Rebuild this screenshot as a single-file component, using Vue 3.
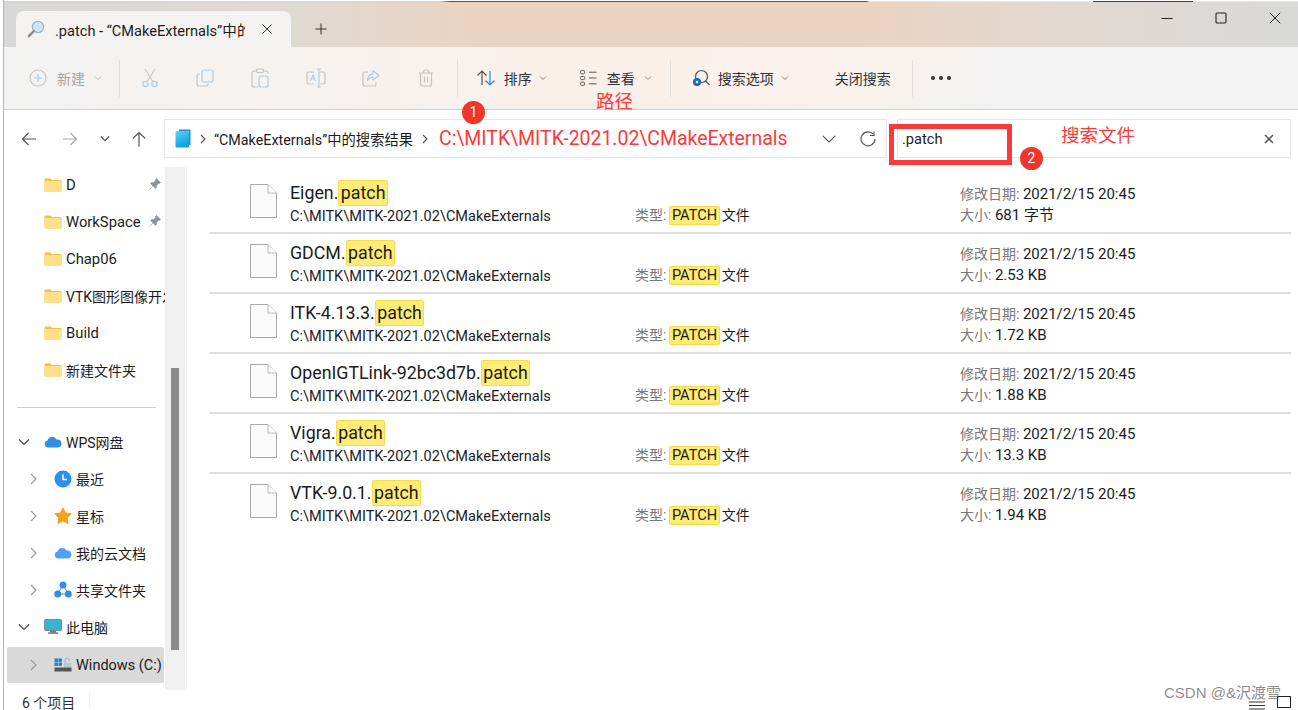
<template>
  <div class="window">
    <div class="top-strip"></div>

    <!-- title bar -->
    <div class="titlebar">
      <div class="tab">
        <svg class="tab-icon" width="18" height="18" viewBox="0 0 18 18">
          <circle cx="11" cy="7" r="5.6" fill="#cfe6f5" stroke="#9db4c4" stroke-width="1.2" />
          <path d="M7 11 L1.8 16.2" stroke="#8a8a8a" stroke-width="2.4" stroke-linecap="round" />
        </svg>
        <span class="tab-title">.patch - “CMakeExternals”中的搜索结果</span>
        <svg class="tab-close" width="12" height="12" viewBox="0 0 12 12">
          <path d="M1.5 1.5 L10.5 10.5 M10.5 1.5 L1.5 10.5" stroke="#333" stroke-width="1" fill="none" />
        </svg>
      </div>
      <svg class="tab-plus" width="12" height="12" viewBox="0 0 12 12">
        <path d="M6 0.5 V11.5 M0.5 6 H11.5" stroke="#333" stroke-width="1" fill="none" />
      </svg>
      <div class="win-controls">
        <svg width="12" height="12" viewBox="0 0 12 12"><path d="M0.5 6.5 H11.5" stroke="#222" stroke-width="1" /></svg>
        <svg width="12" height="12" viewBox="0 0 12 12"><rect x="1" y="1" width="10" height="10" rx="1.2" fill="none" stroke="#222" stroke-width="1.1" /></svg>
        <svg width="12" height="12" viewBox="0 0 12 12"><path d="M0.8 0.8 L11.2 11.2 M11.2 0.8 L0.8 11.2" stroke="#222" stroke-width="1" /></svg>
      </div>
    </div>

    <!-- command bar -->
    <div class="toolbar">
      <div class="tool new-btn disabled">
        <svg width="18" height="18" viewBox="0 0 18 18">
          <circle cx="9" cy="9" r="8" fill="none" stroke="#c4c4c4" stroke-width="1.2" />
          <path d="M9 5 V13 M5 9 H13" stroke="#a9cce8" stroke-width="1.2" />
        </svg>
        <span>新建</span>
        <svg class="caret" width="8" height="8" viewBox="0 0 8 8"><path d="M1 2.5 L4 5.5 L7 2.5" fill="none" stroke="#bbb" /></svg>
      </div>
      <div class="sep sep-a"></div>
      <div class="icon-btn">
        <svg width="18" height="20" viewBox="0 0 18 20">
          <path d="M4 1 L11.5 13 M14 1 L6.5 13" stroke="#c4c4c4" stroke-width="1.1" fill="none" />
          <circle cx="4.5" cy="16" r="2.7" fill="none" stroke="#a9cce8" stroke-width="1.2" />
          <circle cx="13.5" cy="16" r="2.7" fill="none" stroke="#a9cce8" stroke-width="1.2" />
        </svg>
      </div>
      <div class="icon-btn">
        <svg width="18" height="18" viewBox="0 0 18 18">
          <path d="M4 5 H3 A2 2 0 0 0 1 7 V15 A2 2 0 0 0 3 17 H10 A2 2 0 0 0 12 15 V14" fill="none" stroke="#c4c4c4" stroke-width="1.2" />
          <rect x="6" y="1" width="11" height="12" rx="2" fill="none" stroke="#a9cce8" stroke-width="1.2" />
        </svg>
      </div>
      <div class="icon-btn">
        <svg width="18" height="20" viewBox="0 0 18 20">
          <path d="M5 3 H3 A2 2 0 0 0 1 5 V17 A2 2 0 0 0 3 19 H7 M13 3 H15 A2 2 0 0 1 17 5 V6" fill="none" stroke="#c4c4c4" stroke-width="1.2" />
          <rect x="5.5" y="1" width="7" height="3.5" rx="1" fill="none" stroke="#c4c4c4" stroke-width="1.2" />
          <rect x="8" y="8" width="9" height="11" rx="2" fill="none" stroke="#a9cce8" stroke-width="1.2" />
        </svg>
      </div>
      <div class="icon-btn">
        <svg width="20" height="20" viewBox="0 0 20 20">
          <path d="M8 4 H3 A2 2 0 0 0 1 6 V14 A2 2 0 0 0 3 16 H8 M14 4 H17 A2 2 0 0 1 19 6 V14 A2 2 0 0 1 17 16 H14" fill="none" stroke="#c4c4c4" stroke-width="1.2" />
          <path d="M4.5 13 L7 7 L9.5 13 M5.5 11 H8.5 M11 1 H15 M11 19 H15 M13 1 V19" fill="none" stroke="#a9cce8" stroke-width="1.1" />
        </svg>
      </div>
      <div class="icon-btn">
        <svg width="18" height="18" viewBox="0 0 18 18">
          <path d="M6 3 H3 A2 2 0 0 0 1 5 V15 A2 2 0 0 0 3 17 H12 A2 2 0 0 0 14 15 V13" fill="none" stroke="#c4c4c4" stroke-width="1.2" />
          <path d="M11 1.5 L17 6.5 L11 11 V8.2 C8 8.2 6.5 9.5 5.5 11.5 C5.5 7.5 8 5 11 4.8 Z" fill="none" stroke="#a9cce8" stroke-width="1.2" stroke-linejoin="round" />
        </svg>
      </div>
      <div class="icon-btn">
        <svg width="16" height="18" viewBox="0 0 16 18">
          <path d="M1 4 H15 M5.5 4 V2.4 A1.4 1.4 0 0 1 6.9 1 H9.1 A1.4 1.4 0 0 1 10.5 2.4 V4 M2.5 4 V15 A2 2 0 0 0 4.5 17 H11.5 A2 2 0 0 0 13.5 15 V4 M6.5 7.5 V13.5 M9.5 7.5 V13.5" fill="none" stroke="#c4c4c4" stroke-width="1.2" />
        </svg>
      </div>
      <div class="sep sep-b"></div>
      <div class="tool sort-btn">
        <svg width="20" height="18" viewBox="0 0 20 18">
          <path d="M6 16 V2 M1.5 6.5 L6 2 L10.5 6.5" fill="none" stroke="#555" stroke-width="1.2" />
          <path d="M14 2 V16 M9.5 11.5 L14 16 L18.5 11.5" fill="none" stroke="#2f86d6" stroke-width="1.2" />
        </svg>
        <span>排序</span>
        <svg class="caret" width="8" height="8" viewBox="0 0 8 8"><path d="M1 2.5 L4 5.5 L7 2.5" fill="none" stroke="#888" /></svg>
      </div>
      <div class="tool view-btn">
        <svg width="17" height="16" viewBox="0 0 17 16">
          <rect x="0.6" y="0.6" width="4" height="3.2" rx="1" fill="none" stroke="#555" />
          <rect x="0.6" y="6.4" width="4" height="3.2" rx="1" fill="none" stroke="#555" />
          <rect x="0.6" y="12.2" width="4" height="3.2" rx="1" fill="none" stroke="#555" />
          <path d="M9 2.2 H16.5 M9 8 H16.5 M9 13.8 H16.5" stroke="#555" stroke-width="1" />
        </svg>
        <span>查看</span>
        <svg class="caret" width="8" height="8" viewBox="0 0 8 8"><path d="M1 2.5 L4 5.5 L7 2.5" fill="none" stroke="#888" /></svg>
      </div>
      <div class="sep sep-c"></div>
      <div class="tool options-btn">
        <svg width="18" height="18" viewBox="0 0 18 18">
          <circle cx="9.5" cy="7.5" r="6" fill="none" stroke="#555" stroke-width="1.2" />
          <path d="M14 12 L17.5 16" stroke="#555" stroke-width="1.2" />
          <circle cx="5" cy="13" r="4" fill="#1668b8" />
          <circle cx="5" cy="13" r="1.3" fill="#fff" />
        </svg>
        <span>搜索选项</span>
        <svg class="caret" width="8" height="8" viewBox="0 0 8 8"><path d="M1 2.5 L4 5.5 L7 2.5" fill="none" stroke="#888" /></svg>
      </div>
      <div class="tool close-search"><span>关闭搜索</span></div>
      <div class="sep sep-d"></div>
      <div class="more"><i></i><i></i><i></i></div>
    </div>

    <!-- address row -->
    <div class="addressrow">
      <div class="nav">
        <svg width="16" height="14" viewBox="0 0 16 14"><path d="M15 7 H1.5 M7.5 1 L1.5 7 L7.5 13" fill="none" stroke="#555" stroke-width="1.2" /></svg>
        <svg class="nav-forward" width="16" height="14" viewBox="0 0 16 14"><path d="M1 7 H14.5 M8.5 1 L14.5 7 L8.5 13" fill="none" stroke="#a8a8a8" stroke-width="1.2" /></svg>
        <svg width="10" height="14" viewBox="0 0 10 14"><path d="M0.8 4.5 L5 8.7 L9.2 4.5" fill="none" stroke="#555" stroke-width="1.2" /></svg>
        <svg width="14" height="16" viewBox="0 0 14 16"><path d="M7 15.5 V1.5 M0.8 7.5 L7 1.5 L13.2 7.5" fill="none" stroke="#555" stroke-width="1.2" /></svg>
      </div>
      <div class="addressbox">
        <svg class="addr-icon" width="16" height="19" viewBox="0 0 16 19">
          <defs>
            <linearGradient id="addrGrad" x1="0" y1="0" x2="0.4" y2="1">
              <stop offset="0" stop-color="#5fd3f5" />
              <stop offset="1" stop-color="#0f9fe6" />
            </linearGradient>
          </defs>
          <path d="M4 0.5 H15.5 V16 H14 V2 H4 Z" fill="#1f8fd0" />
          <rect x="0.5" y="2" width="13.5" height="16.5" rx="1" fill="url(#addrGrad)" />
        </svg>
        <svg class="crumb" width="6" height="10" viewBox="0 0 6 10"><path d="M1 1 L5 5 L1 9" fill="none" stroke="#555" stroke-width="1.2" /></svg>
        <span class="crumb-text">“CMakeExternals”中的搜索结果</span>
        <svg class="crumb crumb-b" width="6" height="10" viewBox="0 0 6 10"><path d="M1 1 L5 5 L1 9" fill="none" stroke="#555" stroke-width="1.2" /></svg>
        <span class="path-red">C:\MITK\MITK-2021.02\CMakeExternals</span>
        <svg class="addr-down" width="14" height="8" viewBox="0 0 14 8"><path d="M0.8 0.8 L7 7 L13.2 0.8" fill="none" stroke="#555" stroke-width="1.1" /></svg>
        <svg class="addr-refresh" width="16" height="16" viewBox="0 0 16 16">
          <path d="M13.5 3.5 A7 7 0 1 0 15 8" fill="none" stroke="#555" stroke-width="1.1" />
          <path d="M14 0.5 V4.5 H10" fill="none" stroke="#555" stroke-width="1.1" />
        </svg>
      </div>
      <div class="searchbox">
        <span class="search-text">.patch</span>
        <svg class="search-x" width="10" height="10" viewBox="0 0 10 10"><path d="M1 1 L9 9 M9 1 L1 9" stroke="#555" stroke-width="1.5" /></svg>
      </div>
    </div>

    <!-- body -->
    <div class="body">
      <div class="sidebar">
        <div v-for="item in pinned" :key="item.name" class="nav-row">
          <span class="chev-slot"></span>
          <svg class="nav-icon" width="18" height="14" viewBox="0 0 18 14">
            <path d="M0.5 1.5 A1 1 0 0 1 1.5 0.5 H6.5 L8 2 H16.5 A1 1 0 0 1 17.5 3 V12.5 A1 1 0 0 1 16.5 13.5 H1.5 A1 1 0 0 1 0.5 12.5 Z" fill="#f4c33d" />
            <rect x="0.5" y="3" width="17" height="10.5" rx="1" fill="#ffe08a" />
          </svg>
          <span class="nav-label" :class="{ latin: item.latin }">{{ item.name }}</span>
          <svg v-if="item.pin" class="pin" width="12" height="12" viewBox="0 0 12 12">
            <path d="M7.5 0.5 L11.5 4.5 L10.5 5.5 L9.5 5.3 L7.6 7.2 L7.6 9.4 L6.6 10.4 L1.6 5.4 L2.6 4.4 L4.8 4.4 L6.7 2.5 L6.5 1.5 Z M3.8 8.2 L0.5 11.5" fill="#8d959b" stroke="#8d959b" stroke-width="0.6" />
          </svg>
        </div>
        <div class="nav-divider"><i></i></div>

        <div class="nav-row">
          <svg class="chev" width="12" height="8" viewBox="0 0 12 8"><path d="M1 1.5 L6 6.5 L11 1.5" fill="none" stroke="#444" stroke-width="1.2" /></svg>
          <svg class="nav-icon" width="18" height="13" viewBox="0 0 18 13">
            <path d="M4 12.5 A3.5 3.5 0 0 1 3.5 5.6 A5 5 0 0 1 12.6 4.5 A4 4 0 0 1 14 12.5 Z" fill="#2f8fe8" />
          </svg>
          <span class="nav-label">WPS网盘</span>
        </div>
        <div v-for="item in cloud" :key="item.name" class="nav-row sub">
          <svg class="chev" width="7" height="12" viewBox="0 0 7 12"><path d="M1 1 L6 6 L1 11" fill="none" stroke="#999" stroke-width="1.2" /></svg>
          <svg v-if="item.icon === 'clock'" class="nav-icon" width="18" height="18" viewBox="0 0 18 18">
            <circle cx="9" cy="9" r="8.5" fill="#2f8fee" />
            <path d="M9 4.5 V9.5 H13" fill="none" stroke="#fff" stroke-width="1.5" />
          </svg>
          <svg v-else-if="item.icon === 'star'" class="nav-icon" width="18" height="18" viewBox="0 0 18 18">
            <path d="M9 0.8 L11.5 6 L17.3 6.8 L13.1 10.8 L14.1 16.6 L9 13.8 L3.9 16.6 L4.9 10.8 L0.7 6.8 L6.5 6 Z" fill="#f9a11b" stroke="#f9a11b" stroke-linejoin="round" />
          </svg>
          <svg v-else-if="item.icon === 'cloud'" class="nav-icon" width="18" height="13" viewBox="0 0 18 13">
            <path d="M4 12.5 A3.5 3.5 0 0 1 3.5 5.6 A5 5 0 0 1 12.6 4.5 A4 4 0 0 1 14 12.5 Z" fill="#4da3f2" />
          </svg>
          <svg v-else class="nav-icon" width="18" height="17" viewBox="0 0 18 17">
            <circle cx="9" cy="4" r="3.5" fill="#2f8fe8" />
            <circle cx="3.7" cy="13" r="3.5" fill="#2f8fe8" />
            <circle cx="14.3" cy="13" r="3.5" fill="#2f8fe8" />
            <path d="M9 4 L3.7 13 H14.3 Z" fill="none" stroke="#2f8fe8" stroke-width="1" />
          </svg>
          <span class="nav-label">{{ item.name }}</span>
        </div>

        <div class="nav-row">
          <svg class="chev" width="12" height="8" viewBox="0 0 12 8"><path d="M1 1.5 L6 6.5 L11 1.5" fill="none" stroke="#444" stroke-width="1.2" /></svg>
          <svg class="nav-icon" width="18" height="15" viewBox="0 0 18 15">
            <rect x="0.5" y="0.5" width="17" height="11" rx="1" fill="#35b5cf" stroke="#7d8a90" />
            <rect x="6" y="12" width="6" height="1.5" fill="#777" />
            <rect x="4" y="13.5" width="10" height="1.2" fill="#555" />
          </svg>
          <span class="nav-label">此电脑</span>
        </div>
        <div class="nav-row sub selected">
          <svg class="chev" width="7" height="12" viewBox="0 0 7 12"><path d="M1 1 L6 6 L1 11" fill="none" stroke="#999" stroke-width="1.2" /></svg>
          <svg class="nav-icon" width="18" height="14" viewBox="0 0 18 14">
            <rect x="0.5" y="0.5" width="3.4" height="3.4" fill="#1f7fd0" />
            <rect x="4.5" y="0.5" width="3.4" height="3.4" fill="#1f7fd0" />
            <rect x="0.5" y="4.5" width="3.4" height="3.4" fill="#1f7fd0" />
            <rect x="4.5" y="4.5" width="3.4" height="3.4" fill="#1f7fd0" />
            <path d="M11 5 V2.5 A2.2 2.2 0 0 1 15.4 2.5" fill="none" stroke="#9fb4c2" />
            <rect x="10" y="5" width="7" height="4" fill="#b9c9d4" />
            <rect x="0.5" y="9.5" width="17" height="4" fill="#555" />
          </svg>
          <span class="nav-label latin-c">Windows (C:)</span>
        </div>
      </div>

      <div class="scrolltrack"><div class="scrollthumb"></div></div>

      <div class="results">
        <div v-for="file in files" :key="file.base" class="result">
          <svg class="file-icon" width="27" height="34" viewBox="0 0 27 34">
            <path d="M0.5 0.5 H18 L26.5 9 V33.5 H0.5 Z" fill="#fbfbfb" stroke="#a9a9a9" />
            <path d="M18 0.5 V9 H26.5" fill="#fff" stroke="#b8b8b8" />
          </svg>
          <div class="col-name">
            <div class="file-name">{{ file.base }}.<mark class="hit">patch</mark></div>
            <div class="file-path">C:\MITK\MITK-2021.02\CMakeExternals</div>
          </div>
          <div class="col-type">
            <span class="meta-key">类型:</span>
            <mark class="hit hit-small">PATCH</mark>
            <span>文件</span>
          </div>
          <div class="col-meta">
            <div><span class="meta-key">修改日期:</span> <span class="meta-val">2021/2/15 20:45</span></div>
            <div><span class="meta-key">大小:</span> <span class="meta-val">{{ file.size }}</span></div>
          </div>
        </div>
      </div>
    </div>

    <div class="statusbar">
      <span class="status-count">6 个项目</span>
      <i class="status-sep"></i>
      <div class="view-switch">
        <svg class="view-list" width="16" height="14" viewBox="0 0 16 14"><path d="M0 3 H16 M0 6.5 H16 M0 10 H16" stroke="#333" stroke-width="1" /></svg>
        <svg width="14" height="14" viewBox="0 0 14 14"><rect x="0.5" y="1.5" width="13" height="11" fill="#fff" stroke="#222" /></svg>
      </div>
    </div>

    <!-- red annotations drawn over the window -->
    <div class="mark-box"></div>
    <div class="badge badge-one">1</div>
    <div class="badge badge-two">2</div>
    <div class="note note-path">路径</div>
    <div class="note note-search">搜索文件</div>
    <div class="watermark">CSDN @&amp;沢渡雪</div>
  </div>
</template>

<script setup>
const pinned = [
  { name: 'D', pin: true, latin: true },
  { name: 'WorkSpace', pin: true, latin: true },
  { name: 'Chap06', latin: true },
  { name: 'VTK图形图像开发进阶' },
  { name: 'Build', latin: true },
  { name: '新建文件夹' }
]

const cloud = [
  { name: '最近', icon: 'clock' },
  { name: '星标', icon: 'star' },
  { name: '我的云文档', icon: 'cloud' },
  { name: '共享文件夹', icon: 'share' }
]

const files = [
  { base: 'Eigen', size: '681 字节' },
  { base: 'GDCM', size: '2.53 KB' },
  { base: 'ITK-4.13.3', size: '1.72 KB' },
  { base: 'OpenIGTLink-92bc3d7b', size: '1.88 KB' },
  { base: 'Vigra', size: '13.3 KB' },
  { base: 'VTK-9.0.1', size: '1.94 KB' }
]
</script>

<style>
html, body {
  margin: 0;
  background: #fff;
}
</style>

<style scoped>
.window {
  position: relative;
  height: 710px;
  overflow: hidden;
  box-sizing: border-box;
  margin-left: 3px;
  width: 1295px;
  border-left: 1px solid #b4b4b4;
  background: #fff;
  display: flex;
  flex-direction: column;
  font-family: Roboto, "Noto Sans CJK SC", sans-serif;
  font-size: 14px;
  color: #1b1b1b;
}

.top-strip {
  height: 1px;
  flex: none;
  border-top: 1px solid #fff;
  background: linear-gradient(to right, #d4d4d4 0, #d4d4d4 436px, #55504e 446px, #55504e 862px, #e8e8e8 866px, #e8e8e8 1089px, #3a3a5a 1089px, #3a3a5a 1189px, #e8e8e8 1189px);
}

.titlebar {
  flex: none;
  height: 45px;
  display: flex;
  align-items: flex-end;
  background: linear-gradient(to right, #d8d8d8 0, #e0d9d2 300px, #ebd3c1 470px, #ebd3c1 860px, #e2d8d0 1050px, #d9d9d9 1290px);
}

.tab {
  margin-left: 12px;
  width: 275px;
  height: 36px;
  box-sizing: border-box;
  padding-left: 11px;
  display: flex;
  align-items: center;
  background: #f4f3f2;
  border-radius: 8px 8px 0 0;
}

.tab-title {
  margin-left: 10px;
  width: 190px;
  font-size: 14.6px;
  overflow: hidden;
  white-space: nowrap;
}

.tab-close {
  margin-left: 16px;
}

.tab-plus {
  margin: 0 0 12px 24px;
}

.win-controls {
  margin-left: auto;
  align-self: flex-start;
  padding: 10px 17px 0 0;
  display: flex;
  gap: 42px;
}

.toolbar {
  flex: none;
  height: 63px;
  box-sizing: border-box;
  border-bottom: 1px solid #d3cfcc;
  display: flex;
  align-items: center;
  background: linear-gradient(to right, #f3f3f3 0, #f6f2ef 300px, #faf0ea 560px, #f9f1ec 860px, #f3f3f3 1000px);
}

.tool {
  display: flex;
  align-items: center;
  flex: none;
  color: #333;
}

.tool.disabled {
  color: #a6a6a6;
}

.caret {
  margin-left: -1px;
}

.new-btn {
  margin-left: 25px;
  gap: 10px;
}

.sep {
  flex: none;
  width: 1px;
  height: 37px;
  background: #e2e0de;
}

.sep-a {
  margin: 0 2px 0 17px;
}

.icon-btn {
  flex: none;
  width: 55.3px;
  display: flex;
  justify-content: center;
}

.sep-b {
  margin-left: 3px;
}

.sort-btn {
  margin-left: 18px;
  gap: 8px;
}

.view-btn {
  margin-left: 33px;
  gap: 10px;
}

.sep-c {
  margin-left: 18px;
}

.options-btn {
  margin-left: 21px;
  gap: 8px;
}

.close-search {
  margin-left: 46px;
}

.sep-d {
  margin-left: 21px;
}

.more {
  margin-left: 18px;
  display: flex;
  gap: 4px;
}

.more i {
  width: 4px;
  height: 4px;
  border-radius: 50%;
  background: #333;
}

.addressrow {
  flex: none;
  height: 57px;
  box-sizing: border-box;
  padding-top: 9px;
  display: flex;
  align-items: flex-start;
}

.nav {
  width: 160px;
  height: 39px;
  flex: none;
  box-sizing: border-box;
  padding-left: 17px;
  display: flex;
  align-items: center;
  gap: 22px;
}

.nav-forward {
  margin-left: 3px;
}

.addressbox {
  flex: none;
  width: 723px;
  height: 39px;
  box-sizing: border-box;
  border: 1px solid #e6e6e6;
  display: flex;
  align-items: center;
  padding-left: 10px;
}

.crumb {
  margin-left: 9px;
}

.crumb-text {
  margin-left: 8px;
  width: 200px;
  font-size: 14.3px;
  white-space: nowrap;
}

.crumb-b {
  margin-left: 8px;
}

.path-red {
  margin-left: 11px;
  color: #fb3b3b;
  font-size: 19.45px;
  white-space: nowrap;
}

.addr-down {
  margin-left: auto;
}

.addr-refresh {
  margin: 0 10px 0 24px;
}

.searchbox {
  flex: none;
  margin-left: 10px;
  width: 394px;
  height: 39px;
  box-sizing: border-box;
  border: 1px solid #e6e6e6;
  display: flex;
  align-items: center;
  padding-left: 4px;
}

.search-text {
  color: #222;
  font-size: 14.6px;
}

.search-x {
  margin-left: auto;
  margin-right: 16px;
}

.body {
  flex: 1;
  min-height: 0;
  display: flex;
}

.sidebar {
  flex: none;
  width: 161px;
  margin-top: -1px;
  overflow: hidden;
}

.nav-row {
  height: 37px;
  display: flex;
  align-items: center;
  white-space: nowrap;
  overflow: hidden;
  position: relative;
}

.chev-slot, .chev {
  flex: none;
  margin-left: 14px;
  width: 12px;
}

.nav-icon {
  flex: none;
  margin-left: 14px;
  margin-right: 4px;
}

.nav-row.sub .chev {
  margin-left: 26px;
  width: 7px;
}

.nav-row.sub .nav-icon {
  margin-left: 17px;
}

.nav-label {
  flex: none;
}

.nav-label.latin {
  font-size: 14.8px;
}

.nav-label.latin-c {
  font-size: 14.5px;
}

.pin {
  position: absolute;
  left: 145px;
  top: 12px;
}

.nav-divider {
  height: 35px;
  box-sizing: border-box;
  padding: 3px 0 0 13px;
  display: flex;
  align-items: center;
}

.nav-divider i {
  width: 139px;
  height: 1px;
  background: #cfcfcf;
}

.selected {
  height: 36px;
  margin: 2px 1px 1px 3px;
  background: #d9d9d9;
  border-radius: 2px;
}

.nav-row.sub.selected .chev {
  margin-left: 23px;
}

.scrolltrack {
  flex: none;
  width: 20px;
  background: #f0f0f0;
  box-sizing: border-box;
  padding: 201px 6px 0 6px;
}

.scrollthumb {
  height: 282px;
  background: #8b8b8b;
}

.results {
  flex: 1;
  min-width: 0;
  box-sizing: border-box;
  margin-left: 1px;
  border-left: 1px solid #f2f2f2;
  padding: 7px 7px 0 23px;
}

.result {
  height: 60px;
  box-sizing: border-box;
  border-bottom: 2px solid #dedede;
  display: flex;
  padding-left: 40px;
}

.result:last-child {
  border-bottom: 0;
}

.file-icon {
  flex: none;
  margin: 10px 13px 0 0;
}

.col-name {
  flex: none;
  width: 345px;
  padding-top: 6px;
}

.file-name {
  font-size: 17.8px;
  line-height: 24px;
  white-space: nowrap;
}

.hit {
  display: inline-block;
  box-sizing: border-box;
  padding: 0 1.5px;
  background: #ffec75;
  border: 1px solid #f7d94c;
  border-radius: 2px;
  color: inherit;
}

.file-path {
  font-size: 14.56px;
  line-height: 20px;
  color: #222;
}

.col-type {
  flex: none;
  width: 325px;
  padding-top: 31px;
  line-height: 20px;
  white-space: nowrap;
}

.hit-small {
  margin: 0 2px 0 3px;
  font-size: 14.6px;
  line-height: 17px;
}

.meta-key {
  color: #777;
}

.meta-val {
  font-size: 15px;
}

.col-meta {
  padding-top: 10px;
  line-height: 21px;
  white-space: nowrap;
}

.statusbar {
  flex: none;
  height: 20px;
  display: flex;
  align-items: center;
  padding-left: 18px;
  color: #333;
}

.status-count {
  margin-top: 4px;
}

.status-sep {
  margin-left: 14px;
  width: 1px;
  height: 14px;
  background: #eee;
}

.view-switch {
  margin-left: auto;
  padding: 5px 7px 0 0;
  align-self: flex-start;
  display: flex;
  align-items: flex-start;
  gap: 12px;
}

.view-list {
  margin-top: 4px;
}

.mark-box {
  position: absolute;
  left: 885px;
  top: 124px;
  width: 123px;
  height: 41px;
  box-sizing: border-box;
  border: 5px solid #f93a3a;
}

.badge {
  position: absolute;
  width: 23px;
  height: 23px;
  border-radius: 50%;
  background: #f0352d;
  color: #fff;
  font-size: 14px;
  line-height: 23px;
  text-align: center;
}

.badge-one {
  left: 458px;
  top: 101px;
}

.badge-two {
  left: 1016px;
  top: 147px;
}

.note {
  position: absolute;
  color: #fb3b3b;
  font-size: 18.5px;
  line-height: 24px;
  white-space: nowrap;
}

.note-path {
  left: 592px;
  top: 90px;
}

.note-search {
  left: 1057px;
  top: 124px;
}

.watermark {
  position: absolute;
  left: 1160px;
  top: 681px;
  color: rgba(90, 90, 90, 0.7);
  font-size: 15px;
  font-family: "Liberation Sans", "Noto Sans CJK SC", sans-serif;
  white-space: nowrap;
}
</style>
